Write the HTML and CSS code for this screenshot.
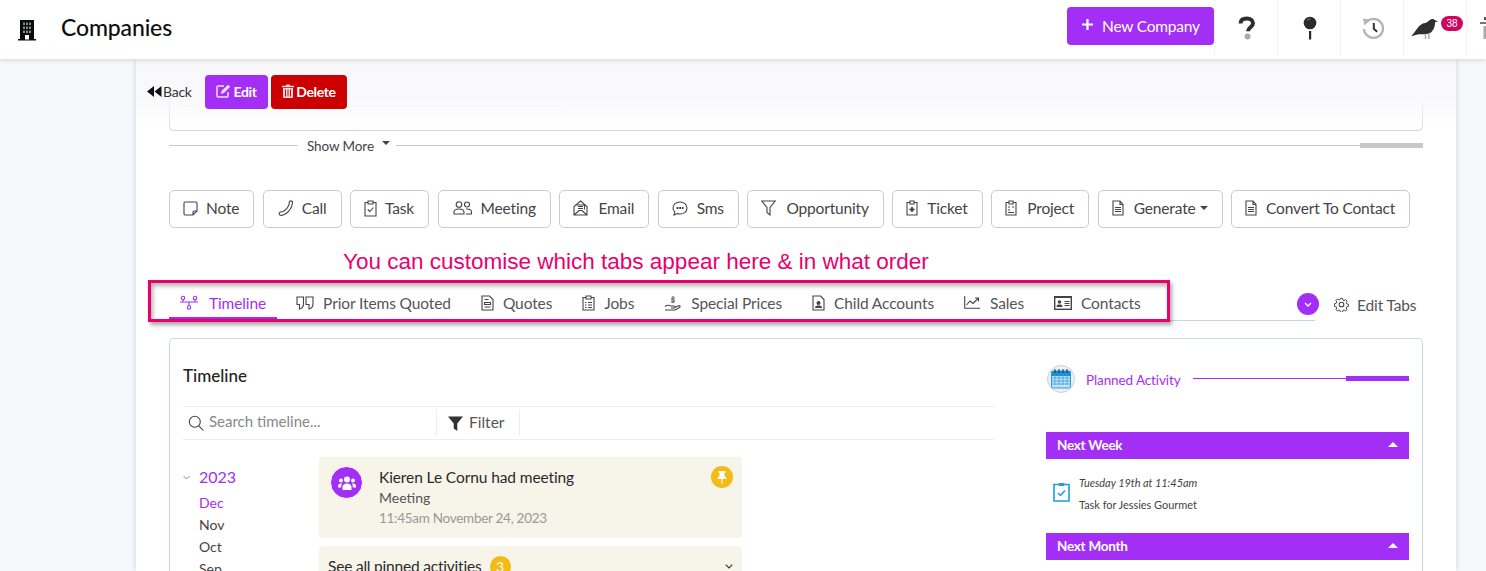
FILE: index.html
```html
<!DOCTYPE html>
<html lang="en">
<head>
<meta charset="utf-8">
<title>Companies</title>
<link rel="stylesheet" href="styles.css">
</head>
<body>
<header class="topbar">
  <svg class="logo" width="18" height="22" viewBox="0 0 18 22"><path fill="#0b0b0b" d="M2 1h14v19h2v1.500H0V20h2z"/><g fill="#7d8a8c"><rect x="5" y="3.500" width="2" height="2.500"/><rect x="8" y="3.500" width="2" height="2.500"/><rect x="11" y="3.500" width="2" height="2.500"/><rect x="5" y="7.500" width="2" height="2.500"/><rect x="8" y="7.500" width="2" height="2.500"/><rect x="11" y="7.500" width="2" height="2.500"/><rect x="5" y="11.500" width="2" height="2.500"/><rect x="8" y="11.500" width="2" height="2.500"/><rect x="11" y="11.500" width="2" height="2.500"/></g><rect x="7" y="16" width="4" height="4.500" fill="#fff"/></svg>
  <h1 class="page-title">Companies</h1>
  <div class="top-actions">
    <button class="btn-new"><svg width="13" height="13" viewBox="0 0 13 13"><path d="M6.500 1v11M1 6.500h11" stroke="#fff" stroke-width="2.200"/></svg><span>New Company</span></button>
    <div class="top-icon"><svg width="18" height="24" viewBox="0 0 18 24"><path d="M2.500 7.500C2.500 4 5.300 2.500 8.800 2.500c3.600 0 6.200 1.800 6.200 4.800 0 4-5 4-5 8" fill="none" stroke="#2e2e2e" stroke-width="4"/><circle cx="9.500" cy="20.500" r="3" fill="#aaa"/></svg></div>
    <div class="top-icon"><svg width="14" height="24" viewBox="0 0 14 24"><circle cx="7" cy="7" r="6.300" fill="#2b2b2b"/><path d="M4 4.500a3 3 0 0 1 3-1.500" stroke="#888" fill="none"/><rect x="6" y="15" width="2.200" height="8.500" fill="#2b2b2b"/></svg></div>
    <div class="top-icon"><svg width="22" height="22" viewBox="0 0 22 22"><path d="M4.300 5.200A9.500 9.500 0 1 1 2 12" fill="none" stroke="#b5b5b5" stroke-width="2.400"/><path d="M1 1.500l7.500 1-6 6z" fill="#b5b5b5"/><path d="M11.800 6v5.800l3.400 3" fill="none" stroke="#333" stroke-width="2"/></svg></div>
    <div class="top-icon crow"><svg width="27" height="23" viewBox="0 0 28 23"><path fill="#2f2f2f" d="M0 19.500C5 15 7 9 11 7c3-1.500 5-1 7-3 1.500-2.500 5-3.500 7-1l3 1-3 1c0 5-2 10-7 12-3 1-7 0-10 .5C5 18 3 19 0 19.500z"/><path d="M15 17v5.500M18.500 16.500v6" stroke="#aaa" stroke-width="1.500"/></svg><span class="badge">38</span></div>
    <div class="top-icon cut"><svg width="12" height="24" viewBox="0 0 12 24"><rect x="4" y="1" width="3" height="3" fill="#555"/><rect x="0" y="6" width="12" height="2" fill="#777"/><rect x="3.500" y="10" width="4" height="13" fill="#aaa"/></svg></div>
  </div>
</header>

<div class="layout">
  <main class="sheet">
    <div class="back-bar">
      <a class="back"><svg width="15" height="11" viewBox="0 0 15 11"><path fill="#111" d="M7 0v11L0 5.500zM14.500 0v11l-7-5.500z"/></svg>Back</a>
      <button class="btn-solid purple"><svg width="15" height="14" viewBox="0 0 15 14"><path d="M12 8v4a1 1 0 0 1-1 1H2a1 1 0 0 1-1-1V3a1 1 0 0 1 1-1h6" fill="none" stroke="#f2ddff" stroke-width="1.500"/><path d="M5.500 7L12 .7l2.200 2.100L7.700 9.200l-2.800.6z" fill="#f2ddff"/></svg>Edit</button>
      <button class="btn-solid red"><svg width="12" height="14" viewBox="0 0 12 14"><path fill="#ffdcdc" d="M0 1.800h3.800L4.500.5h3l.7 1.300H12v1.400H0zM1 4h10v9a1 1 0 0 1-1 1H2a1 1 0 0 1-1-1zm2 1.500v7h1v-7zm2.500 0v7h1v-7zm2.500 0v7h1v-7z"/></svg>Delete</button>
    </div>

    <section class="detail-box"><div class="detail-field"></div></section>

    <div class="show-more">
      <span class="rule rule-left"></span>
      <span class="show-label">Show More</span>
      <span class="caret-up-dn"></span>
      <span class="rule rule-right"></span>
    </div>

    <nav class="actions">
      <button class="act"><svg width="15" height="15" viewBox="0 0 15 15" class="ic"><path d="M1 2a1 1 0 0 1 1-1h11a1 1 0 0 1 1 1v8l-4 4H2a1 1 0 0 1-1-1zM14 10h-3a1 1 0 0 0-1 1v3"/></svg>Note</button>
      <button class="act"><svg width="17" height="17" viewBox="0 0 17 17" class="ic"><path d="M15.500 1.500c-1-.6-2.300-.8-3-.2-.6.6 0 2-.6 3.500-1 2.600-3.300 5.500-5.800 6.700-1.300.6-2.500 0-3.100.6-.6.600-1 1.700-.6 2.500.7.800 2.500 1 4.400.1 3-1.400 6.500-5 7.800-8.200.7-1.800 1-3.500.9-5z"/></svg>Call</button>
      <button class="act"><svg width="13" height="17" viewBox="0 0 13 17" class="ic"><path d="M4 2.500H1v13.500h11V2.500H9M4 1h5v3H4zM3.800 9.500l2 2 3.500-4"/></svg>Task</button>
      <button class="act"><svg width="21" height="14" viewBox="-1 0 21 14" class="ic"><circle cx="6" cy="3.500" r="2.800"/><circle cx="14" cy="3.500" r="2.500"/><path d="M1 13v-2c0-2 2-3 5-3s5 1 5 3v2zM13 8c3-.3 5.500.7 5.500 3v2H13"/></svg>Meeting</button>
      <button class="act"><svg width="17" height="16" viewBox="0 0 17 16" class="ic"><path d="M1 6.500v8.500h13V6.500L7.500 1zM1 15l5-4.500h3l5 4.500M3.500 5h8v4.500M5 6.500h5M5 8.500h5"/></svg>Email</button>
      <button class="act"><svg width="17" height="15" viewBox="0 0 17 15" class="ic"><path d="M8 1c4 0 7 2.500 7 6s-3 6-7 6c-1 0-2-.2-2.800-.5L2 14l.8-3C1.600 9.900 1 8.500 1 7c0-3.500 3-6 7-6z"/><path class="sm" d="M4.500 7h7" stroke-dasharray="2 .8" stroke-width="2"/></svg>Sms</button>
      <button class="act"><svg width="17" height="16" viewBox="0 0 17 16" class="ic"><path d="M.8 1h13.400L9 7.500V15l-3-2.500v-5z"/></svg>Opportunity</button>
      <button class="act"><svg width="13" height="16" viewBox="0 0 13 16" class="ic"><path d="M4 2.500H1V15h10V2.500H8M4 1h4v3H4z"/><path d="M6 7v5M3.500 9.500h5" stroke-width="1.800"/></svg>Ticket</button>
      <button class="act"><svg width="14" height="16" viewBox="0 0 14 16" class="ic"><path d="M4 2.500H1V15h10V2.500H8M4 1h4v3H4zM3 7h2M7 7h2M3 10h2M3 12.500h6"/></svg>Project</button>
      <button class="act"><svg width="14" height="16" viewBox="0 0 14 16" class="ic"><path d="M1 1h7l3 3.500V15H1zM8 1v3.500h3M3 7.500h6M3 9.500h6M3 11.500h6"/></svg>Generate<span class="caret"></span></button>
      <button class="act"><svg width="13" height="16" viewBox="0 0 13 16" class="ic"><path d="M1 1h7l3 3.500V15H1zM8 1v3.500h3M3 7.500h6M3 9.500h6M3 11.500h6"/></svg>Convert To Contact</button>
    </nav>

    <p class="annotation">You can customise which tabs appear here &amp; in what order</p>

    <div class="tabs-row">
      <div class="tabs">
        <a class="tab active"><svg width="21" height="15" viewBox="0 0 21 15" class="ic"><circle cx="3" cy="3" r="1.700"/><circle cx="15" cy="3" r="1.700"/><circle cx="9" cy="12.500" r="1.700"/><path d="M0 7h18M3 5v2M15 5v2M9 7v4"/></svg>Timeline</a>
        <a class="tab"><svg width="19" height="14" viewBox="0 0 19 14" class="ic"><path d="M1 1h6.500v6.500c0 3-1.500 5-4 5.500V8.500H1zM10 1h7v6.500c0 3-1.500 5-4 5.500V8.500h-3z"/></svg>Prior Items Quoted</a>
        <a class="tab"><svg width="14" height="16" viewBox="0 0 14 16" class="ic"><path d="M1 1h7.500L12 4.500V15H1zM3.500 4.500h4M3.500 7.500h6v2h-6zM3.500 12h6"/></svg>Quotes</a>
        <a class="tab"><svg width="14" height="16" viewBox="0 0 14 16" class="ic"><path d="M4 2.500H1V15h11V2.500H9M4 1h5v3H4zM3 7.500h1.500M6 7.500h4M3 10h1.500M6 10h4M3 12.500h1.500M6 12.500h4"/></svg>Jobs</a>
        <a class="tab"><svg width="19" height="16" viewBox="0 0 19 16" class="ic"><path d="M1 11.500c2-1.500 4-1.500 6-.5h3c1.500 0 1.500 2 0 2H7M10.500 12.500l4-1.800c1.500-.5 2.200 1 1 1.800l-4.500 2.500H1M9 1v1M9 7v1M11 3H8v2h2v2H7"/></svg>Special Prices</a>
        <a class="tab"><svg width="14" height="16" viewBox="0 0 14 16" class="ic"><path d="M1 1h7.500L12 4.500V15H1z"/><circle class="fill" cx="6.500" cy="8" r="2"/><path class="fill" d="M3 13c0-2 1.500-2.500 3.500-2.500s3.500.5 3.500 2.500z"/></svg>Child Accounts</a>
        <a class="tab"><svg width="18" height="13" viewBox="0 0 18 13" class="ic"><path d="M.7 0v12.300H16M2.500 9l3.500-4 3 2.500L14 2.500M11 2h3.500v3.500"/></svg>Sales</a>
        <a class="tab"><svg width="19" height="14" viewBox="0 0 19 14" class="ic"><rect x=".7" y=".7" width="16.600" height="12.600" stroke-width="1.400"/><path d="M.7 1h16.600" stroke-width="2"/><circle class="fill" cx="5.500" cy="6" r="1.800"/><path class="fill" d="M2.500 11c0-2 1.200-2.500 3-2.500s3 .5 3 2.500z"/><path d="M10.500 5.500h5M10.500 7.500h5M10.500 9.500h5"/></svg>Contacts</a>
      </div>
      <button class="collapse"><svg width="8" height="5" viewBox="0 0 8 5"><path d="M1 1l3 3 3-3" fill="none" stroke="#fff" stroke-width="1.300"/></svg></button>
      <a class="edit-tabs"><svg width="15" height="15" viewBox="0 0 16 16" class="ic"><circle cx="8" cy="8" r="2.500"/><path d="M6.800 1h2.400l.4 2 1.300.6 1.800-1.100 1.700 1.700-1.100 1.800.6 1.300 2 .4v2.400l-2 .4-.6 1.300 1.100 1.800-1.700 1.700-1.800-1.100-1.300.6-.4 2H6.800l-.4-2-1.300-.6-1.800 1.100-1.700-1.700 1.100-1.800-.6-1.300-2-.4V6.900l2-.4.6-1.300-1.100-1.800 1.700-1.700 1.800 1.100 1.300-.6z" transform="translate(.5 .5) scale(.94)"/></svg>Edit Tabs</a>
    </div>

    <section class="card">
      <div class="left-col">
        <h2 class="card-title">Timeline</h2>
        <div class="toolbar">
          <div class="search"><svg width="16" height="16" viewBox="0 0 16 16" class="ic"><circle cx="6.800" cy="6.800" r="5.500"/><path d="M10.800 10.800l4.500 4.500"/></svg><span>Search timeline...</span></div>
          <div class="filter"><svg width="15" height="15" viewBox="0 0 15 15"><path fill="#333" d="M0 .5h15L9.300 7.500V15l-3.600-2.500v-5z"/></svg><span>Filter</span></div>
        </div>
        <div class="tl-body">
          <div class="years">
            <div class="year"><svg width="7" height="5" viewBox="0 0 7 5"><path d="M.5 1l3 3 3-3" fill="none" stroke="#888"/></svg>2023</div>
            <ul class="months">
              <li class="cur">Dec</li><li>Nov</li><li>Oct</li><li>Sep</li>
            </ul>
          </div>
          <div class="feed">
            <article class="event">
              <div class="avatar"><svg width="18" height="14" viewBox="0 0 18 14"><g fill="#fff"><circle cx="9" cy="3.500" r="3"/><circle cx="3" cy="4.500" r="2"/><circle cx="15" cy="4.500" r="2"/><path d="M4.500 14v-3c0-2 2-3.500 4.500-3.500s4.500 1.500 4.500 3.500v3zM0 11.500V10c0-1.500 1-2.500 3-2.500.5 0 .8 0 1 .2-.5.700-.8 1.500-.8 3.800zM18 11.500V10c0-1.500-1-2.500-3-2.500-.5 0-.8 0-1 .2.500.7.800 1.500.800 3.800z"/></g></svg></div>
              <div class="event-text">
                <div class="event-title">Kieren Le Cornu had meeting</div>
                <div class="event-type">Meeting</div>
                <div class="event-time">11:45am November 24, 2023</div>
              </div>
              <span class="pin"><svg width="12" height="14" viewBox="0 0 12 14"><path d="M2.500 1h7v1.500L8.500 3v3l2 2v1h-4v5l-.5.500L5.500 14V9h-4V8l2-2V3l-1-.5z" fill="#fff"/></svg></span>
            </article>
            <div class="pinned"><span>See all pinned activities</span><span class="count">3</span><svg class="pinned-chev" width="8" height="5" viewBox="0 0 8 5"><path d="M.7 .7L4 4l3.300-3.300" fill="none" stroke="#333" stroke-width="1.100"/></svg></div>
          </div>
        </div>
      </div>
      <aside class="right-col">
        <div class="planned">
          <svg width="28" height="28" viewBox="0 0 28 28"><circle cx="14" cy="14" r="13.500" fill="#eef1f3" stroke="#d0d0d0"/><rect x="4.500" y="6" width="19" height="17" rx="2" fill="#bfe2f5" stroke="#2f9bd6"/><rect x="4.500" y="6" width="19" height="5" fill="#1b8fd2"/><path d="M8 9v11M12 9v11M16 9v11M20 9v11M5 13h18M5 16h18M5 19h18" stroke="#3ea5dd" stroke-width=".8"/><path d="M8 4v4M12 4v4M16 4v4M20 4v4" stroke="#135" stroke-width="1"/></svg>
          <span class="planned-label">Planned Activity</span>
          <span class="planned-line"></span>
          <span class="planned-thick"></span>
        </div>
        <div class="band"><span>Next Week</span><i class="up"></i></div>
        <div class="task">
          <svg width="17" height="20" viewBox="0 0 17 20"><path d="M5.500 2.500H1v16.500h15V2.500h-4.500" fill="none" stroke="#1b9ddb" stroke-width="1.600"/><path d="M5.500 1h6v3h-6z" fill="#1b9ddb"/><path d="M5 11l2.500 2.500 4.500-5" fill="none" stroke="#1b9ddb" stroke-width="1.500"/></svg>
          <div class="task-text">
            <div class="task-when">Tuesday 19th at 11:45am</div>
            <div class="task-what">Task for Jessies Gourmet</div>
          </div>
        </div>
        <div class="band"><span>Next Month</span><i class="up"></i></div>
      </aside>
    </section>

    <div class="highlight"></div>
  </main>
</div>
</body>
</html>
```

FILE: styles.css
```css
* { box-sizing: border-box; }
html, body { height: 100%; margin: 0; overflow: hidden; }
body { background: #f7f8fb; font-family: "Lato", "Liberation Sans", sans-serif; color: #444; }
button { font-family: inherit; cursor: pointer; }

.topbar { position: relative; z-index: 5; height: 59px; background: #fff; display: flex; align-items: center; box-shadow: 0 1px 5px rgba(60,60,80,.18); padding-left: 18px; }
.logo { margin-top: 1px; }
.page-title { margin: 0 0 0 25px; font-size: 23px; font-weight: 500; color: #0d0d0d; position: relative; top: -3px; letter-spacing: -.14px; }
.top-actions { margin-left: auto; display: flex; align-items: center; height: 100%; }
.btn-new { width: 147px; height: 38px; margin-top: -7px; background: #a32ef6; border: 0; border-radius: 4px; color: #fff; font-size: 15.500px; display: flex; align-items: center; padding: 0 0 0 14px; gap: 8px; letter-spacing: -.2px; white-space: nowrap; }
.btn-new svg { margin-top: -3px; }
.top-icon { width: 63px; height: 56px; padding-left: 2px; border-left: 1px solid #f3f3f3; display: flex; align-items: center; justify-content: center; margin-top: -3px; }
.top-icon.crow { justify-content: flex-start; padding-left: 7px; position: relative; }
.top-icon.cut { width: 20px; justify-content: flex-start; padding-left: 13px; overflow: hidden; }
.top-icon.cut svg { flex: none; }
.badge { position: absolute; left: 37px; top: 16px; width: 22px; height: 15px; border-radius: 8px; background: #cf0560; color: #fff; font: 10px "Liberation Sans", sans-serif; line-height: 15px; text-align: center; }

.layout { padding-left: 136px; padding-right: 30px; }
.sheet { position: relative; height: 512px; background: #fff; padding: 0 33px; box-shadow: 0 0 5px rgba(90,90,140,.25); }

.back-bar { position: absolute; left: 0; right: 0; top: 0; height: 68px; padding: 16px 0 0 11px; display: flex; align-items: flex-start; background: linear-gradient(#f8f8fa 0%, #f9f9fb 55%, rgba(255,255,255,.2) 100%); }
.back { display: flex; align-items: center; gap: 1px; height: 34px; padding-bottom: 2px; font-size: 14px; color: #333; width: 58px; letter-spacing: -.25px; }
.btn-solid { height: 34px; border: 0; border-radius: 4px; color: #fff; font-size: 14px; font-weight: 700; display: flex; align-items: center; justify-content: center; gap: 2px; padding: 0 0 2px; letter-spacing: -.35px; }
.purple { background: #a32ef6; width: 63px; }
.red { background: #cc0000; width: 76px; margin-left: 3px; }

.detail-box { height: 72px; border: 1px solid #c8d6e2; border-top: 0; border-radius: 0 0 5px 5px; padding: 47px 0 0 12px; }
.detail-field { width: 384px; height: 1px; background: #f0f0f0; }

.show-more { height: 29px; display: flex; align-items: center; }
.rule { height: 1px; background: #c9c9c9; }
.rule-left { width: 129px; }
.show-label { margin-left: 9px; font-size: 13.500px; color: #444; letter-spacing: -.1px; }
.caret-up-dn { margin: -5px 0 0 8px; border: 4px solid transparent; border-top: 4px solid #444; border-bottom: 0; }
.rule-right { flex: 1; margin-left: 6px; position: relative; }
.rule-right::after { content: ""; position: absolute; right: 0; top: -2px; width: 63px; height: 5px; background: #c9c9c9; }

.actions { margin-top: 30px; display: flex; gap: 8.500px; }
.act { height: 38px; padding: 0 14px 2px 13px; display: flex; align-items: center; gap: 8px; background: #fff; border: 1px solid #ccc; border-radius: 5px; font-size: 15.500px; letter-spacing: -.16px; color: #444; white-space: nowrap; }
.ic { fill: none; stroke: #444; stroke-width: 1.100; flex: none; }
.ic .fill { fill: #444; stroke: none; }
.ic .sm { stroke: #444; }
.caret { margin-left: -4px; border: 4px solid transparent; border-top: 4px solid #444; border-bottom: 0; }

.annotation { margin: 20px 0 0 174px; height: 28px; line-height: 28px; font-family: "Liberation Sans", Arial, sans-serif; font-size: 22.500px; color: #e8006f; white-space: nowrap; }

.tabs-row { margin-top: 9px; height: 36px; display: flex; }
.tabs { flex: 1; display: flex; gap: 8px; height: 36px; border-bottom: 1px solid #c8d6e2; }
.tab { height: 34px; padding: 3px 11px 0; display: flex; align-items: center; gap: 8px; font-size: 15.500px; letter-spacing: -.11px; color: #555; border-bottom: 2px solid transparent; white-space: nowrap; }
.tab.active { color: #a32ef6; border-bottom-color: #a32ef6; }
.tab.active .ic { stroke: #a32ef6; }
.collapse { width: 22px; height: 22px; margin: 8px 0 0 -18px; padding: 0; border: 0; border-radius: 50%; background: #a32ef6; display: flex; align-items: center; justify-content: center; flex: none; }
.edit-tabs { width: 82px; margin-left: 15px; margin-right: 7px; flex: none; display: flex; align-items: center; gap: 8px; font-size: 15.500px; letter-spacing: -.13px; color: #555; height: 36px; padding-top: 3px; white-space: nowrap; }

.card { margin-top: 17px; height: 260px; border: 1px solid #c8d6e2; border-radius: 5px; padding: 0 13px; display: flex; justify-content: space-between; }
.left-col { width: 811px; }
.card-title { margin: 26px 0 0; font-size: 17px; line-height: 22px; font-weight: 500; color: #222; }
.toolbar { margin-top: 19px; height: 34px; display: flex; align-items: center; border-top: 1px solid #eee; border-bottom: 1px solid #eee; }
.search { width: 254px; height: 26px; padding-left: 5px; display: flex; align-items: center; gap: 5px; font-size: 15px; color: #888; border-right: 1px solid #eee; }
.search span { position: relative; top: -2px; }
.filter { width: 83px; height: 26px; padding-left: 11px; display: flex; align-items: center; gap: 6px; font-size: 15.500px; color: #555; border-right: 1px solid #eee; }
.filter span { position: relative; top: -1px; }
.tl-body { display: flex; margin-top: 17px; }
.years { width: 136px; }
.year { display: flex; align-items: center; gap: 9px; margin-top: 10px; font-size: 16px; line-height: 20px; color: #a32ef6; }
.months { list-style: none; margin: 5px 0 0 16px; padding: 0; font-size: 14px; color: #444; }
.months li { height: 22px; line-height: 22px; }
.months .cur { color: #a32ef6; }
.feed { width: 423px; }
.event { position: relative; height: 81px; background: #f7f4ea; border-radius: 2px; display: flex; padding: 9px 0 0 11px; }
.avatar { width: 33px; height: 33px; flex: none; border-radius: 50%; background: #a32ef6; border: 1px solid #fff; display: flex; align-items: center; justify-content: center; }
.event-text { margin-left: 16px; }
.event-title { font-size: 15.500px; letter-spacing: -.1px; line-height: 22px; color: #2a2a2a; }
.event-type { font-size: 14px; line-height: 20px; color: #555; }
.event-time { font-size: 13.500px; letter-spacing: -.28px; line-height: 20px; color: #999; }
.pin { position: absolute; right: 9px; top: 9px; width: 22px; height: 22px; border-radius: 50%; background: #f2bc14; display: flex; align-items: center; justify-content: center; }
.pinned { margin-top: 8px; height: 60px; background: #f7f4ea; border-radius: 5px 5px 0 0; padding: 10px 9px 0; display: flex; align-items: flex-start; font-size: 15.500px; letter-spacing: -.2px; line-height: 20px; color: #2a2a2a; }
.count { width: 21px; height: 21px; margin-left: 8px; border-radius: 50%; background: #f2bc14; color: #fff; font-size: 14px; line-height: 21px; text-align: center; }
.pinned-chev { margin: 8px 0 0 auto; }

.right-col { width: 363px; }
.planned { display: flex; align-items: center; height: 28px; margin-top: 26px; }
.planned svg { margin-left: 1px; }
.planned-label { margin-left: 11px; font-size: 13.500px; letter-spacing: -.1px; color: #a32ef6; white-space: nowrap; padding-top: 2px; }
.planned-line { margin-left: 12px; flex: 1; height: 1px; background: #a32ef6; margin-top: -1px; }
.planned-thick { width: 63px; height: 5px; background: #a32ef6; margin-top: -1px; }
.band { height: 27px; padding: 0 11px 2px; background: #a32ef6; color: #fff; font-size: 13.500px; letter-spacing: -.25px; font-weight: 700; display: flex; align-items: center; justify-content: space-between; margin-top: 39px; }
.up { width: 0; height: 0; border: 5px solid transparent; border-bottom: 5px solid #fff; border-top: 0; }
.task { height: 74px; display: flex; padding: 23px 0 0 7px; color: #444; }
.task + .band { margin-top: 0; }
.task-text { margin: -10px 0 0 9px; font-size: 11px; letter-spacing: -.05px; }
.task-when { font-style: italic; line-height: 22px; }
.task-what { line-height: 22px; }

.highlight { position: absolute; left: 12px; top: 221px; width: 1022px; height: 42px; border: 3px solid #e8006f; box-shadow: 2px 3px 4px rgba(0,0,0,.35), inset 2px 3px 4px rgba(0,0,0,.3); }
```
